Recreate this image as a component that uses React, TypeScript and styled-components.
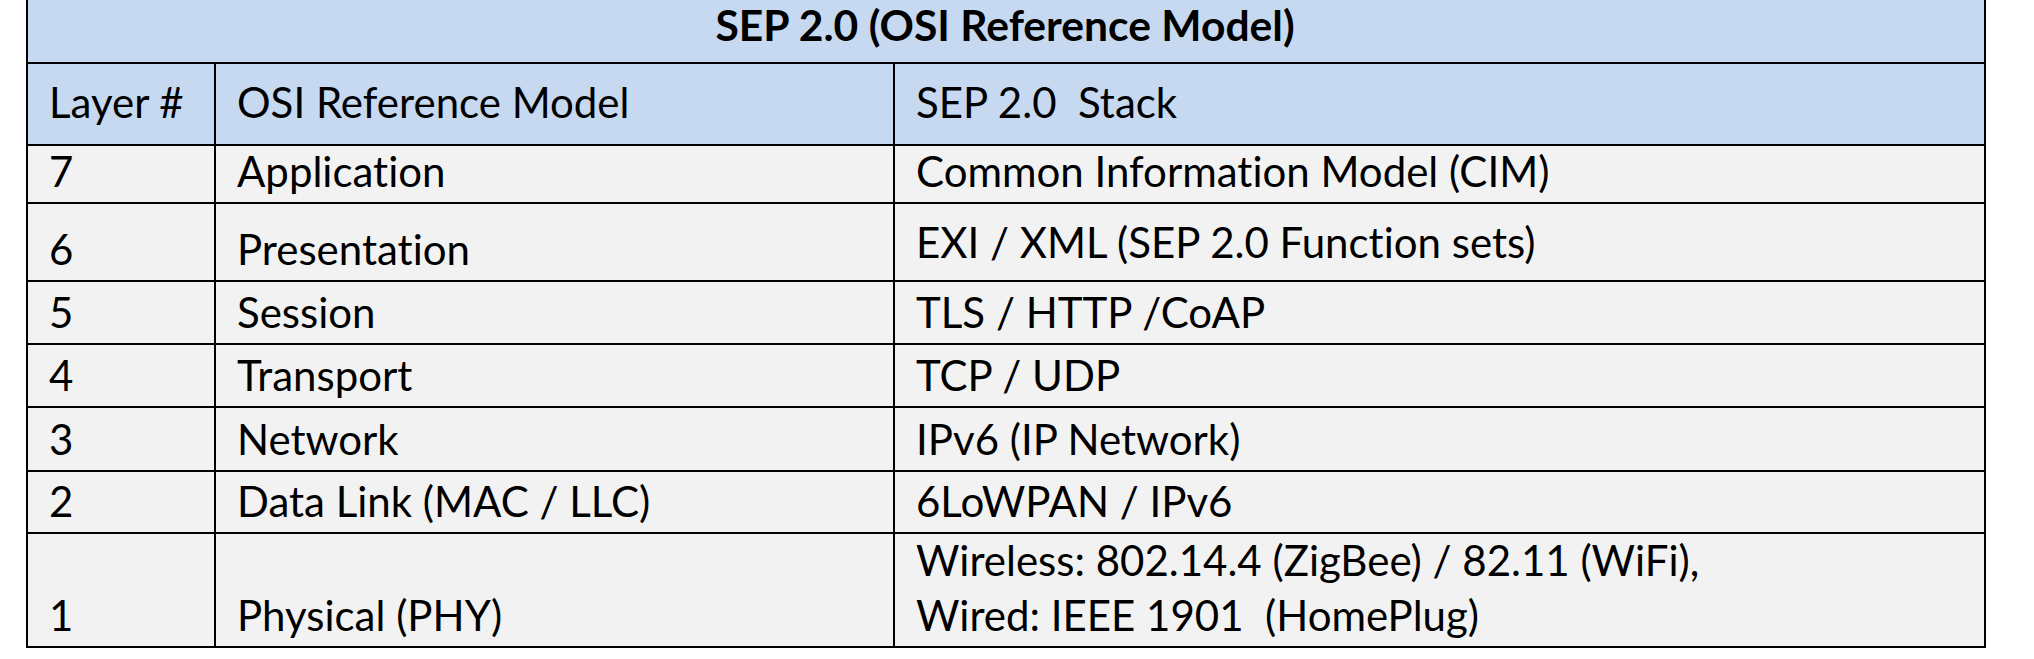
import React from "react";
import styled, { createGlobalStyle } from "styled-components";

const Global = createGlobalStyle`
  html, body { margin: 0; padding: 0; background: #ffffff; }
  body {
    font-family: Lato, "Open Sans", sans-serif;
    color: #000;
    font-variant-ligatures: none;
    font-feature-settings: "liga" 0, "clig" 0;
  }
`;

const Page = styled.div`
  padding-left: 26px;
  width: 2034px;
  height: 659px;
  box-sizing: border-box;
  overflow: hidden;
`;

const Table = styled.div<{ $rows: string }>`
  display: grid;
  grid-template-columns: 186px 677px 1089px;
  grid-template-rows: ${(p) => p.$rows};
  gap: 2px;
  width: 1960px;
  box-sizing: border-box;
  background: #000;
  border: 2px solid #000;
  border-top: none;
`;

const Cell = styled.div<{ $head?: boolean; $align?: "start" | "center" | "end"; $padTop?: number }>`
  display: flex;
  flex-direction: column;
  justify-content: ${(p) => (p.$align === "start" ? "flex-start" : p.$align === "center" ? "center" : "flex-end")};
  background: ${(p) => (p.$head ? "#c6d9f1" : "#f2f2f2")};
  padding: ${(p) => (p.$padTop ?? 0)}px 10px 3px 21px;
  font-size: 42px;
  line-height: 55px;
  white-space: pre;
  overflow: hidden;
`;

const Title = styled.div`
  grid-column: 1 / -1;
  display: flex;
  align-items: flex-end;
  justify-content: center;
  background: #c6d9f1;
  padding: 0 2px 10px 0;
  font-size: 42.6px;
  line-height: 55px;
  font-weight: 700;
  white-space: pre;
`;

type Row = { n: string; osi: string; sep: string[]; h: number; sepTop?: boolean };

const rows: Row[] = [
  { n: "7", osi: "Application", sep: ["Common Information Model (CIM)"], h: 56 },
  { n: "6", osi: "Presentation", sep: ["EXI / XML (SEP 2.0 Function sets)"], h: 76, sepTop: true },
  { n: "5", osi: "Session", sep: ["TLS / HTTP /CoAP"], h: 61 },
  { n: "4", osi: "Transport", sep: ["TCP / UDP"], h: 61 },
  { n: "3", osi: "Network", sep: ["IPv6 (IP Network)"], h: 62 },
  { n: "2", osi: "Data Link (MAC / LLC)", sep: ["6LoWPAN / IPv6"], h: 60 },
  {
    n: "1",
    osi: "Physical (PHY)",
    sep: ["Wireless: 802.14.4 (ZigBee) / 82.11 (WiFi),", "Wired: IEEE 1901  (HomePlug)"],
    h: 112,
  },
];

export default function App() {
  const template = ["62px", "80px", ...rows.map((r) => `${r.h}px`)].join(" ");
  return (
    <>
      <Global />
      <Page>
        <Table $rows={template}>
          <Title>SEP 2.0 (OSI Reference Model)</Title>
          <Cell $head $align="center">Layer #</Cell>
          <Cell $head $align="center">OSI Reference Model</Cell>
          <Cell $head $align="center">SEP 2.0  Stack</Cell>
          {rows.map((r) => (
            <React.Fragment key={r.n}>
              <Cell>{r.n}</Cell>
              <Cell>{r.osi}</Cell>
              <Cell $align={r.sepTop ? "start" : "end"} $padTop={r.sepTop ? 11 : 0}>
                {r.sep.map((line) => (
                  <span key={line}>{line}</span>
                ))}
              </Cell>
            </React.Fragment>
          ))}
        </Table>
      </Page>
    </>
  );
}
